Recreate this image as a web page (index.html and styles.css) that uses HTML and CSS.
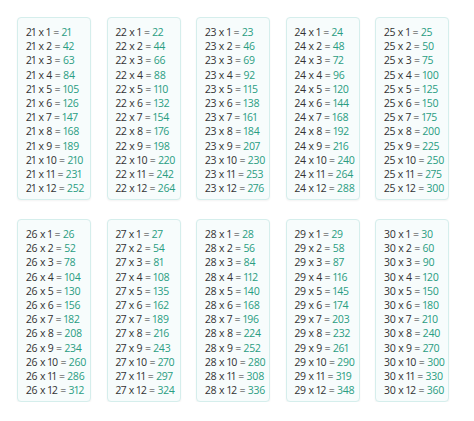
FILE: index.html
```html
<!DOCTYPE html>
<html>
<head>
<meta charset="utf-8">
<link rel="stylesheet" href="styles.css">
</head>
<body>
<div class="grid" id="grid"></div>
<script>
var g = document.getElementById('grid');
for (var n = 21; n <= 30; n++) {
  var c = document.createElement('div');
  c.className = 'card';
  for (var i = 1; i <= 12; i++) {
    var r = document.createElement('div');
    r.className = 'row';
    r.appendChild(document.createTextNode(n + ' x ' + i + ' = '));
    var s = document.createElement('span');
    s.className = 'res';
    s.textContent = n * i;
    r.appendChild(s);
    c.appendChild(r);
  }
  g.appendChild(c);
}
</script>
</body>
</html>
```
FILE: styles.css
```css
html, body {
  margin: 0;
  padding: 0;
  background: #ffffff;
}
body {
  font-family: "Open Sans", "Noto Sans", sans-serif;
  font-size: 10.5px;
  letter-spacing: -0.2px;
  font-variant-numeric: proportional-nums;
  color: #333333;
}
.grid {
  display: grid;
  grid-template-columns: repeat(5, 74px);
  column-gap: 15.5px;
  row-gap: 19px;
  padding: 17px 0 0 17px;
}
.card {
  height: 183px;
  box-sizing: border-box;
  border: 1px solid #d5eeec;
  border-radius: 4px;
  background: #f7fcfc;
  box-shadow: 0 1px 2px rgba(0, 0, 0, 0.05);
  padding: 7px 0 0 8px;
}
.row {
  line-height: 14.2px;
  white-space: nowrap;
}
.res {
  color: #2a9d82;
}
```
